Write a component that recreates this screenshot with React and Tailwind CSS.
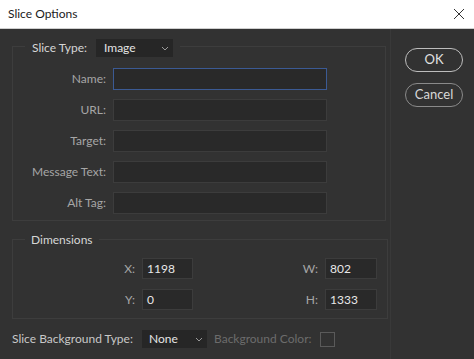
import React from "react";

const font = { fontFamily: "Lato, 'Liberation Sans', sans-serif" };

function Chevron() {
  return (
    <svg width="8" height="5" viewBox="0 0 8 5" className="shrink-0">
      <path d="M1 1 L4 4 L7 1" fill="none" stroke="#9a9a9a" strokeWidth="1" />
    </svg>
  );
}

function Field({ label, focused }) {
  return (
    <div className="flex items-center h-[22px]">
      <div className="w-[93px] text-right text-[12px] text-[#a6a6a6]">{label}</div>
      <div
        className={
          "ml-[7px] w-[214px] h-[22px] bg-[#292929] border " +
          (focused ? "border-[#3b5a94]" : "border-[#3c3c3c]")
        }
      />
    </div>
  );
}

function NumInput({ value, w }) {
  return (
    <div
      className={
        "ml-[7px] h-[21px] bg-[#292929] border border-[#3c3c3c] flex items-center pl-[4px] text-[12px] text-[#e8e8e8] " +
        w
      }
    >
      {value}
    </div>
  );
}

export default function App() {
  return (
    <div className="w-[474px] h-[359px] bg-[#323232] flex flex-col overflow-hidden" style={font}>
      <div className="h-[29px] bg-white border-b border-[#cfcfcf] flex items-center justify-between pl-[8px] pr-[9px] shrink-0">
        <span className="text-[12px] text-[#1a1a1a]">Slice Options</span>
        <svg width="12" height="12" viewBox="0 0 12 12">
          <path d="M1 1 L11 11 M11 1 L1 11" stroke="#333" strokeWidth="1" />
        </svg>
      </div>
      <div className="flex flex-1">
        <div className="w-[391px] border-r border-[#393939] flex flex-col pl-[12px]">
          {/* Panel 1 */}
          <div className="mt-[17px] w-[374px] border border-[#3d3d3d] flex flex-col">
            <div className="-mt-[8px] flex h-[18px]">
              <div className="w-[12px] shrink-0" />
              <div className="px-[7px] bg-[#323232] flex items-center h-[18px]">
                <span className="w-[57px] shrink-0 text-[12px] text-[#d6d6d6] whitespace-nowrap">Slice Type:</span>
                <div className="ml-[7px] w-[77px] h-[18px] bg-[#262626] flex items-center justify-between pl-[8px] pr-[4px]">
                  <span className="text-[12px] text-[#e4e4e4]">Image</span>
                  <Chevron />
                </div>
              </div>
            </div>
            <div className="mt-[11px] flex flex-col gap-[9px] pb-[6px]">
              <Field label="Name:" focused />
              <Field label="URL:" />
              <Field label="Target:" />
              <Field label="Message Text:" />
              <Field label="Alt Tag:" />
            </div>
          </div>
          {/* Panel 2 */}
          <div className="mt-[18px] w-[376px] border border-[#3d3d3d] flex flex-col">
            <div className="-mt-[9px] flex h-[17px]">
              <div className="w-[12px] shrink-0" />
              <div className="px-[6px] bg-[#323232] h-[17px] flex items-center">
                <span className="text-[12px] text-[#d6d6d6]">Dimensions</span>
              </div>
            </div>
            <div className="mt-[10px] flex flex-col gap-[10px] pb-[8px]">
              <div className="flex items-center h-[21px]">
                <div className="w-[122px] text-right text-[12px] text-[#a6a6a6]">X:</div>
                <NumInput value="1198" w="w-[51px]" />
                <div className="w-[125px] text-right text-[12px] text-[#a6a6a6]">W:</div>
                <NumInput value="802" w="w-[52px]" />
              </div>
              <div className="flex items-center h-[21px]">
                <div className="w-[122px] text-right text-[12px] text-[#a6a6a6]">Y:</div>
                <NumInput value="0" w="w-[51px]" />
                <div className="w-[125px] text-right text-[12px] text-[#a6a6a6]">H:</div>
                <NumInput value="1333" w="w-[52px]" />
              </div>
            </div>
          </div>
          {/* Bottom row */}
          <div className="mt-[11px] flex items-center h-[18px]">
            <div className="w-[130px] text-[12px] text-[#c8c8c8] whitespace-nowrap">Slice Background Type:</div>
            <div className="w-[65px] h-[18px] bg-[#262626] flex items-center justify-between pl-[7px] pr-[4px]">
              <span className="text-[12px] text-[#e4e4e4]">None</span>
              <Chevron />
            </div>
            <span className="ml-[7px] text-[12px] text-[#6c6c6c]">Background Color:</span>
            <div className="ml-[8px] w-[15px] h-[15px] border border-[#5a5a5a] bg-[#323232]" />
          </div>
        </div>
        <div className="flex flex-col pl-[14px] pt-[19px] gap-[11px]">
          <button className="w-[58px] h-[24px] rounded-full border border-[#bdbdbd] text-[13px] text-[#e0e0e0] flex items-center justify-center">
            OK
          </button>
          <button className="w-[58px] h-[24px] rounded-full border border-[#8a8a8a] text-[13px] text-[#d8d8d8] flex items-center justify-center">
            Cancel
          </button>
        </div>
      </div>
    </div>
  );
}
